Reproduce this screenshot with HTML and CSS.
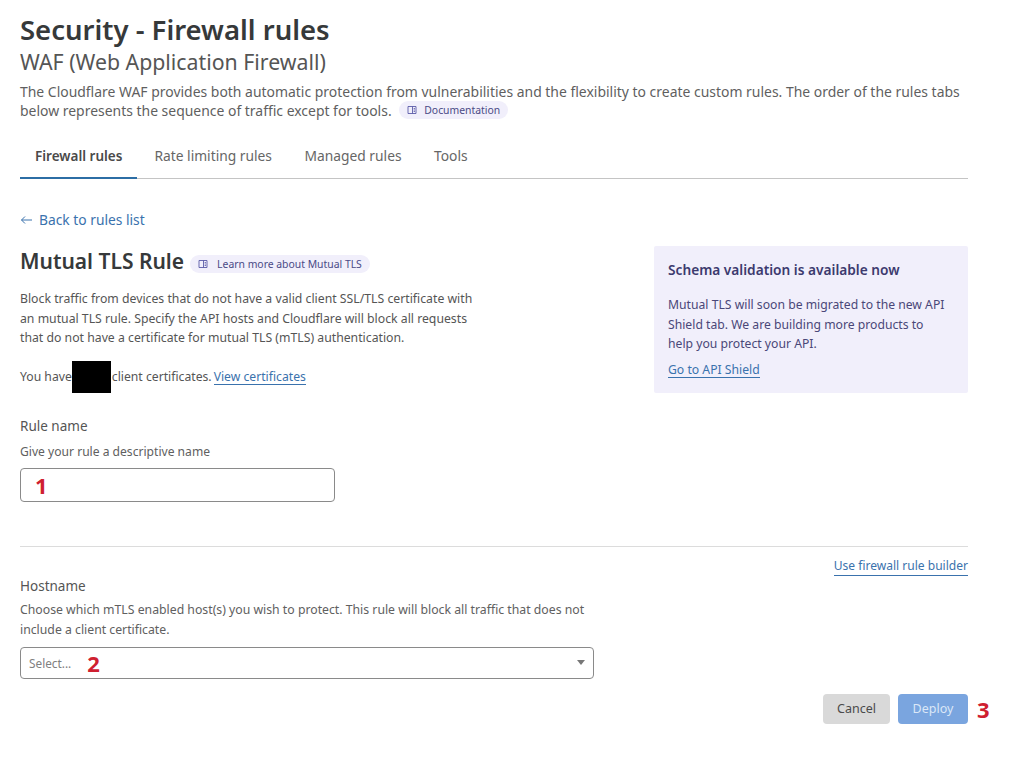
FILE: index.html
```html
<!DOCTYPE html>
<html lang="en">
<head>
<meta charset="utf-8">
<title>Security - Firewall rules</title>
<link rel="stylesheet" href="styles.css">
</head>
<body>
<main class="page">
  <header class="head">
    <h1 class="title">Security - Firewall rules</h1>
    <h2 class="subtitle">WAF (Web Application Firewall)</h2>
    <p class="intro"><span>The Cloudflare WAF provides both automatic protection from vulnerabilities and the flexibility to create custom rules. The order of the rules tabs</span><br><span>below represents the sequence of traffic except for tools.</span> <a class="pill pill-doc"><svg class="book" viewBox="0 0 10 10"><path d="M1 1.5h8v7H1zM5.5 1.5v7M6.7 3.5h1.2M6.700 5h1.200M6.700 6.500h1.200"/></svg>Documentation</a></p>
  </header>
  <nav class="tabs">
    <a class="tab active">Firewall rules</a>
    <a class="tab">Rate limiting rules</a>
    <a class="tab">Managed rules</a>
    <a class="tab">Tools</a>
  </nav>
  <a class="back"><svg class="arrow" viewBox="0 0 12 10"><path d="M11.5 5H1M4.500 1.500 1 5l3.500 3.500"/></svg>Back to rules list</a>
  <section class="top">
    <div class="main">
      <div class="rule-head">
        <h3 class="rule-title">Mutual TLS Rule</h3>
        <a class="pill pill-learn"><svg class="book" viewBox="0 0 10 10"><path d="M1 1.5h8v7H1zM5.5 1.500v7M6.700 3.500h1.200M6.700 5h1.200M6.700 6.500h1.200"/></svg>Learn more about Mutual TLS</a>
      </div>
      <p class="desc">Block traffic from devices that do not have a valid client SSL/TLS certificate with<br>an mutual TLS rule. Specify the API hosts and Cloudflare will block all requests<br>that do not have a certificate for mutual TLS (mTLS) authentication.</p>
      <p class="count"><span>You have</span><span class="redact"></span><span>client certificates.</span><a class="link">View certificates</a></p>
      <label class="label">Rule name</label>
      <p class="hint">Give your rule a descriptive name</p>
      <div class="input"><span class="mark">1</span></div>
    </div>
    <aside class="notice">
      <h4 class="notice-title">Schema validation is available now</h4>
      <p class="notice-text">Mutual TLS will soon be migrated to the new API Shield tab. We are building more products to help you protect your API.</p>
      <a class="link">Go to API Shield</a>
    </aside>
  </section>
  <div class="builder"><a class="link link-builder">Use firewall rule builder</a></div>
  <label class="label label-host">Hostname</label>
  <p class="hint hint-host">Choose which mTLS enabled host(s) you wish to protect. This rule will block all traffic that does not include a client certificate.</p>
  <div class="select"><span class="placeholder">Select...</span><span class="mark">2</span><span class="caret"></span></div>
  <div class="actions">
    <button class="btn btn-cancel">Cancel</button>
    <button class="btn btn-deploy">Deploy</button>
    <span class="mark mark-3">3</span>
  </div>
</main>
</body>
</html>
```
FILE: styles.css
```css
* { box-sizing: border-box; }
html, body { margin: 0; background: #fff; }
body { font-family: "Noto Sans", "Open Sans", sans-serif; color: #4a4a4a; height: 776px; overflow: hidden; }
p, h1, h2, h3, h4 { margin: 0; }
.page { padding: 12px 0 0 20px; width: 1024px; }
.title { font-size: 27.500px; line-height: 36px; font-weight: 600; color: #36393a; }
.subtitle { font-size: 21.300px; line-height: 28px; font-weight: 400; color: #555; }
.intro { font-size: 13.950px; line-height: 19px; margin-top: 6px; width: 948px; color: #5f5f5f; }
.pill { display: inline-flex; align-items: center; background: #f1effb; color: #4a4a86; border-radius: 10px; font-size: 10.400px; }
.pill-doc { height: 18px; padding: 0 8px; margin-left: 4px; gap: 7px; vertical-align: 1px; line-height: 14px; }
.pill-learn { height: 18px; padding: 0 8px; gap: 9px; margin-top: 4px; }
.book { width: 10px; height: 10px; fill: none; stroke: #5b5ba8; stroke-width: .9; }
.tabs { display: flex; width: 948px; margin-top: 17px; border-bottom: 1px solid #c4c4c4; height: 42px; }
.tab { font-size: 13.800px; line-height: 38px; padding: 0 15px; margin-right: 2.500px; color: #666; }
.active { font-size: 13.500px; font-weight: 600; color: #4a4a4a; border-bottom: 2px solid #2c6ea5; height: 42px; margin-right: 2px; }
.back { display: flex; align-items: center; gap: 6px; margin-top: 32px; font-size: 13.800px; line-height: 18px; color: #3a72ad; }
.arrow { width: 13px; height: 10px; fill: none; stroke: #3a72ad; stroke-width: 1; }
.top { display: flex; justify-content: space-between; width: 948px; margin-top: 16px; }
.main { width: 480px; }
.rule-head { display: flex; align-items: center; gap: 6px; margin-top: 3px; height: 27px; }
.rule-title { font-size: 21px; font-weight: 600; line-height: 27px; color: #36393a; }
.desc { font-size: 12.250px; line-height: 19.500px; margin-top: 14px; color: #555; }
.count { display: flex; align-items: center; height: 32px; margin-top: 13px; font-size: 12.200px; color: #555; }
.redact { width: 39px; height: 32px; background: #000; }
.count .link { margin-left: 2px; }
.count .redact + span { margin-left: 1px; }
.link { color: #3a72ad; border-bottom: 1px solid #3a72ad; font-size: 12.200px; line-height: 15px; display: inline-block; }
.link-builder { font-size: 12.050px; }
.label { display: block; font-size: 13.500px; line-height: 18px; margin-top: 24px; color: #555; }
.hint { font-size: 12.100px; line-height: 19px; margin-top: 7px; color: #606060; }
.input { display: flex; align-items: center; width: 315px; height: 34px; margin-top: 7px; padding-left: 14px; border: 1px solid #8a8a8a; border-radius: 4px; }
.mark { font-weight: 700; color: #cf2030; font-size: 22px; line-height: 24px; font-family: "Open Sans", "Noto Sans", sans-serif; }
.notice { width: 314px; height: 147px; margin-top: 1px; padding: 14px 20px 14px 14px; background: #f1effb; border-radius: 2px; color: #4a4778; }
.notice-title { font-size: 13.700px; line-height: 20px; font-weight: 600; color: #3c3a6e; }
.notice-text { font-size: 12.200px; line-height: 19.500px; margin-top: 15px; margin-bottom: 3px; }
.builder { display: flex; justify-content: flex-end; width: 948px; margin-top: 44px; border-top: 1px solid #dcdcdc; padding-top: 11px; height: 30px; }
.label-host { margin-top: 1px; }
.hint-host { width: 580px; font-size: 12.250px; line-height: 20px; margin-top: 5px; }
.select { display: flex; align-items: center; width: 574px; height: 32px; margin-top: 7px; padding: 0 8px; border: 1px solid #8a8a8a; border-radius: 4px; }
.placeholder { font-size: 11.800px; color: #808080; margin-right: 16px; }
.caret { margin-left: auto; width: 0; height: 0; border-left: 4.500px solid transparent; border-right: 4.500px solid transparent; border-top: 5px solid #777; }
.actions { display: flex; align-items: center; width: 948px; margin-top: 15px; justify-content: flex-end; gap: 8px; }
.btn { width: 67px; height: 30px; border: 0; border-radius: 4px; font: 400 12.500px "Noto Sans", sans-serif; }
.btn-cancel { background: #d9d9d9; color: #4a4a4a; }
.btn-deploy { width: 70px; background: #7aa5df; color: #dbe7f7; }
.mark-3 { width: 14px; margin-right: -23px; margin-left: 1px; }
```
